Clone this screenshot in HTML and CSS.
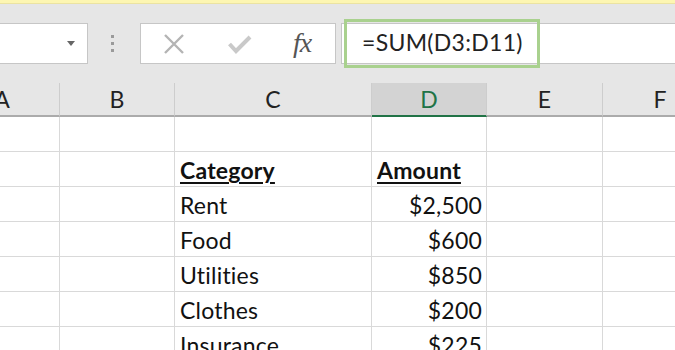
FILE: index.html
```html
<!DOCTYPE html>
<html lang="en">
<head>
  <meta charset="UTF-8">
  <title>Sheet - SUM</title>
  <link rel="stylesheet" href="styles.css">
</head>
<body>
  <div class="notice"></div>
  <div class="toolbar">
    <div class="name-box"><span class="caret"></span></div>
    <div class="grip"><span></span><span></span><span></span></div>
    <div class="fx-buttons">
      <svg class="icon" width="22" height="20" viewBox="0 0 22 20">
        <path d="M2 1 L20 19 M20 1 L2 19" stroke="#b4b4b4" stroke-width="2.4" fill="none"/>
      </svg>
      <svg class="icon" width="24" height="20" viewBox="0 0 24 20">
        <path d="M1.5 10 L8 17 L22 3" stroke="#c9c9c9" stroke-width="4" fill="none"/>
      </svg>
      <span class="fx">fx</span>
    </div>
    <div class="formula">
      <div class="formula-mark">=SUM(D3:D11)</div>
    </div>
  </div>

  <div class="sheet">
    <div class="head">A</div>
    <div class="head">B</div>
    <div class="head">C</div>
    <div class="head selected">D</div>
    <div class="head">E</div>
    <div class="head">F</div>

    <div class="cell"></div><div class="cell"></div><div class="cell"></div><div class="cell"></div><div class="cell"></div><div class="cell"></div>

    <div class="cell"></div><div class="cell"></div>
    <div class="cell title">Category</div>
    <div class="cell title">Amount</div>
    <div class="cell"></div><div class="cell"></div>

    <div class="cell"></div><div class="cell"></div>
    <div class="cell">Rent</div>
    <div class="cell num">$2,500</div>
    <div class="cell"></div><div class="cell"></div>

    <div class="cell"></div><div class="cell"></div>
    <div class="cell">Food</div>
    <div class="cell num">$600</div>
    <div class="cell"></div><div class="cell"></div>

    <div class="cell"></div><div class="cell"></div>
    <div class="cell">Utilities</div>
    <div class="cell num">$850</div>
    <div class="cell"></div><div class="cell"></div>

    <div class="cell"></div><div class="cell"></div>
    <div class="cell">Clothes</div>
    <div class="cell num">$200</div>
    <div class="cell"></div><div class="cell"></div>

    <div class="cell"></div><div class="cell"></div>
    <div class="cell">Insurance</div>
    <div class="cell num">$225</div>
    <div class="cell"></div><div class="cell"></div>
  </div>
</body>
</html>
```

FILE: styles.css
```css
body {
  margin: 0;
  width: 675px;
  height: 350px;
  overflow: hidden;
  background: #e6e6e6;
  font-family: Lato, "Open Sans", sans-serif;
  color: #1a1a1a;
}

.notice {
  height: 3px;
  background: #fdf6b2;
  border-bottom: 1px solid #ebe3a2;
}

.toolbar {
  display: flex;
  align-items: center;
  height: 41px;
  padding: 19px 0 19px;
}

.name-box {
  box-sizing: border-box;
  width: 90px;
  height: 41px;
  margin-left: -2px;
  background: #fff;
  border: 1px solid #c6c6c6;
  display: flex;
  align-items: center;
  justify-content: flex-end;
  padding-right: 12px;
}

.caret {
  width: 0;
  height: 0;
  border-left: 4px solid transparent;
  border-right: 4px solid transparent;
  border-top: 5px solid #666;
}

.grip {
  display: flex;
  flex-direction: column;
  gap: 4px;
  margin: 0 26px 0 23px;
}

.grip span {
  width: 3px;
  height: 3px;
  background: #9a9a9a;
}

.fx-buttons {
  box-sizing: border-box;
  width: 196px;
  height: 41px;
  background: #fff;
  border: 1px solid #c6c6c6;
  display: flex;
  align-items: center;
  padding-left: 22px;
}

.icon:nth-child(2) {
  margin-left: 43px;
}

.fx {
  margin-left: 41px;
  font-family: "Liberation Serif", serif;
  font-style: italic;
  font-size: 28px;
  color: #555;
  letter-spacing: -1px;
  margin-top: -2px;
}

.formula {
  box-sizing: border-box;
  flex: 1;
  height: 41px;
  margin-left: 5px;
  background: #fff;
  border: 1px solid #c6c6c6;
  border-right: none;
  display: flex;
  align-items: center;
}

.formula-mark {
  box-sizing: border-box;
  width: 196px;
  height: 49px;
  margin-left: 2px;
  border: 3px solid #a9d18e;
  padding: 0 0 3px 15px;
  display: flex;
  align-items: center;
  font-size: 23px;
  letter-spacing: 0.3px;
  color: #222;
  flex-shrink: 0;
}

.sheet {
  display: grid;
  grid-template-columns: 115px 115px 197px 115px 116px 115px;
  grid-auto-rows: 35px;
  grid-template-rows: 34px;
  margin-left: -55px;
  background: #fff;
}

.head {
  box-sizing: border-box;
  background: #e6e6e6;
  border-right: 1px solid #cdcdcd;
  border-bottom: 2px solid #ababab;
  display: flex;
  align-items: center;
  justify-content: center;
  font-size: 23px;
  color: #222;
  padding-bottom: 1px;
}

.head.selected {
  background: #d3d3d3;
  border-bottom-color: #217346;
  color: #217346;
}

.cell {
  box-sizing: border-box;
  border-right: 1px solid #d9d9d9;
  border-bottom: 1px solid #d9d9d9;
  display: flex;
  align-items: flex-end;
  padding: 0 4px 3px 5px;
  font-size: 23px;
  line-height: 26px;
  letter-spacing: 0.2px;
  color: #111;
}

.title {
  font-weight: bold;
  text-decoration: underline;
  text-decoration-thickness: 2px;
  text-underline-offset: 3px;
}

.num {
  justify-content: flex-end;
}
```
